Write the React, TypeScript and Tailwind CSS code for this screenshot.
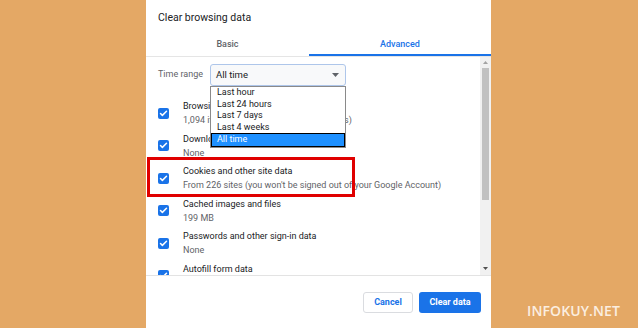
import { Check } from 'lucide-react';

type Item = {
  title: string;
  detail: string;
  marked?: boolean;
};

const items: Item[] = [
  { title: 'Browsing history', detail: '1,094 items (and more on synced devices)' },
  { title: 'Download history', detail: 'None' },
  { title: 'Cookies and other site data', detail: "From 226 sites (you won't be signed out of your Google Account)", marked: true },
  { title: 'Cached images and files', detail: '199 MB' },
  { title: 'Passwords and other sign-in data', detail: 'None' },
  { title: 'Autofill form data', detail: 'None' },
];

const ranges = ['Last hour', 'Last 24 hours', 'Last 7 days', 'Last 4 weeks', 'All time'];

function CheckRow({ item }: { item: Item }) {
  return (
    <div className="relative h-[32.5px] shrink-0 flex items-center gap-[14px]">
      <div className="w-[11px] h-[11px] rounded-[2px] bg-[#1a73e8] flex items-center justify-center shrink-0">
        <Check className="w-[9px] h-[9px] text-white" strokeWidth={4} />
      </div>
      <div className="flex flex-col leading-[14px] text-[9px] whitespace-nowrap">
        <span className="text-[#202124]">{item.title}</span>
        <span className="text-[#5f6368]">{item.detail}</span>
      </div>
      {/* red annotation box from the screenshot */}
      {item.marked && (
        <div className="absolute left-[-11px] top-[-5px] w-[208px] h-[40px] border-[3px] border-[#e00000]" />
      )}
    </div>
  );
}

function TimeRange() {
  return (
    <div className="flex items-center h-[22px] shrink-0">
      <span className="w-[52px] text-[9px] text-[#5f6368]">Time range</span>
      <div className="relative w-[136px] h-[22px]">
        <div className="h-full rounded-[3px] border border-[#aec6ea] bg-[#f8f9fa] flex items-center justify-between pl-[5px] pr-[6px]">
          <span className="text-[9.5px] text-[#202124]">All time</span>
          <svg width="7" height="4" viewBox="0 0 7 4">
            <path d="M0 0 H7 L3.5 4 Z" fill="#5f6368" />
          </svg>
        </div>
        {/* open dropdown menu */}
        <div className="absolute left-0 top-full w-[136px] bg-white border border-[#8a8a8a] z-10 flex flex-col text-[9px] leading-[11.5px]">
          {ranges.map((r) =>
            r === 'All time' ? (
              <div key={r} className="bg-[#1e90ff] border border-black text-white pl-[5px]">
                {r}
              </div>
            ) : (
              <div key={r} className="text-[#202124] pl-[6px]">
                {r}
              </div>
            )
          )}
        </div>
      </div>
    </div>
  );
}

function Scrollbar() {
  return (
    <div className="w-[11px] bg-[#f1f1f1] flex flex-col items-center shrink-0">
      <svg width="5" height="3" viewBox="0 0 5 3" className="mt-[4px]">
        <path d="M0 3 L2.5 0 L5 3 Z" fill="#a3a3a3" />
      </svg>
      <div className="mt-[4px] w-[7px] h-[132px] bg-[#c1c1c1]" />
      <div className="flex-1" />
      <svg width="5" height="3" viewBox="0 0 5 3" className="mb-[5px]">
        <path d="M0 0 H5 L2.5 3 Z" fill="#505050" />
      </svg>
    </div>
  );
}

export default function App() {
  return (
    <div className="w-[638px] h-[328px] bg-[#e4a865] flex overflow-hidden" style={{ fontFamily: 'Roboto, "Liberation Sans", sans-serif' }}>
      <div className="ml-[146px] w-[345px] h-full bg-white flex flex-col shrink-0">
        <div className="h-[35px] flex items-center pl-[12px] pt-[1px] text-[10.5px] text-[#202124] shrink-0">
          Clear browsing data
        </div>

        {/* Tabs */}
        <div className="flex h-[22px] shrink-0 border-b border-[#e5e5e5] text-[9px] font-medium">
          <div className="w-[163px] flex items-center justify-center text-[#5f6368] pb-[2px]">Basic</div>
          <div className="flex-1 flex items-center justify-center text-[#1a73e8] border-b-2 border-[#1a73e8]">Advanced</div>
        </div>

        {/* Scroll area */}
        <div className="flex h-[218px] shrink-0">
          <div className="flex-1 flex flex-col pl-[12px] pt-[7px] overflow-hidden">
            <TimeRange />
            <div className="flex flex-col mt-[11px]">
              {items.map((item) => (
                <CheckRow key={item.title} item={item} />
              ))}
            </div>
          </div>
          <Scrollbar />
        </div>

        {/* Footer */}
        <div className="flex-1 border-t border-[#e3e3e3] flex justify-end items-start pt-[16px] pr-[10px] gap-[6px] text-[9px] font-bold">
          <button className="w-[50px] h-[21px] rounded-[3px] border border-[#dadce0] text-[#1a73e8] bg-white">Cancel</button>
          <button className="w-[62px] h-[21px] rounded-[3px] bg-[#1a73e8] text-white">Clear data</button>
        </div>
      </div>

      <div className="flex-1 flex items-end justify-end pr-[18px] pb-[7px]">
        <span className="text-[14px] font-semibold text-[#fbeee0] tracking-[0.1px]" style={{ fontFamily: '"Open Sans", sans-serif' }}>
          INFOKUY.NET
        </span>
      </div>
    </div>
  );
}
